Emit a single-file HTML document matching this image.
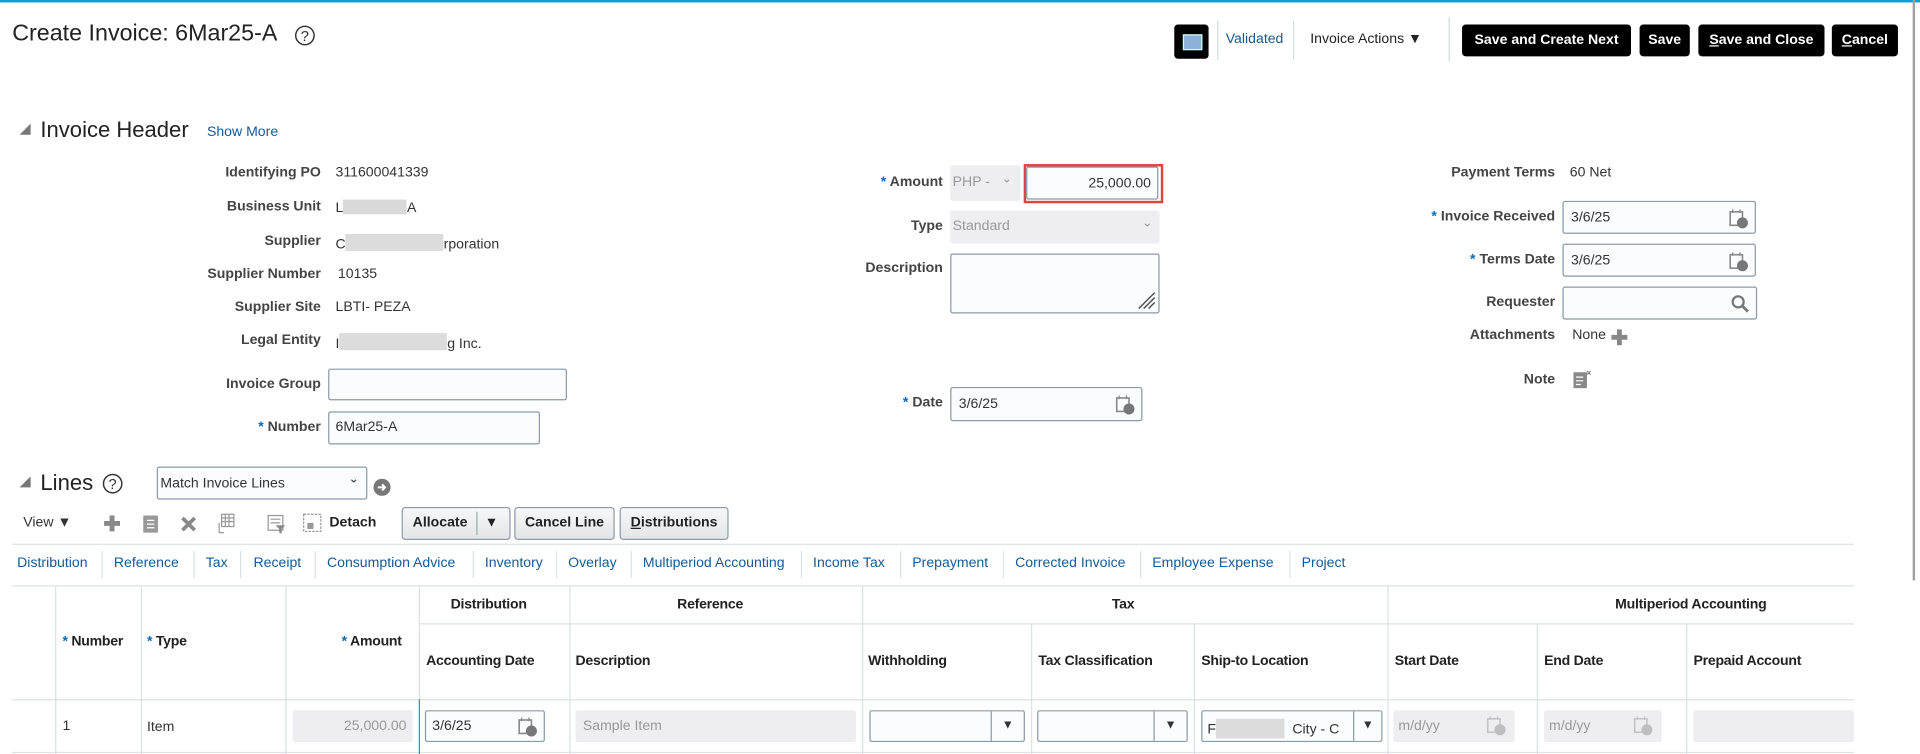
<!DOCTYPE html>
<html><head><meta charset="utf-8"><style>
html,body{margin:0;padding:0;background:#fff;overflow:hidden;width:1920px;height:754px}
#w{position:absolute;left:0;top:0;width:1568px;height:616px;transform:scale(1.22449);transform-origin:0 0;font-family:"Liberation Sans",Arial,sans-serif;color:#333;font-size:11.5px}
.a{position:absolute;white-space:nowrap}
.lbl{position:absolute;font-weight:bold;color:#444;text-align:right;font-size:11.5px;white-space:nowrap}
.val{position:absolute;font-size:11.5px;color:#333;white-space:nowrap}
.inp{position:absolute;border:1px solid #8a9aa8;border-radius:2px;background:#fbfcfd;box-sizing:border-box}
.dis{position:absolute;background:#eeeef0;border-radius:2px;color:#999;box-sizing:border-box}
.st{color:#0b6ab8;font-weight:bold}
.btn{position:absolute;background:#000;color:#fff;font-weight:bold;border-radius:3px;text-align:center;line-height:26px;height:26px;font-size:11.5px}
.gb{position:absolute;background:linear-gradient(#f6f7f8,#e3e6e9);border:1px solid #8c9aa7;border-radius:3px;font-weight:bold;box-sizing:border-box;height:27px;line-height:25px;font-size:11.5px;text-align:center;color:#222}
.tab{position:absolute;top:454px;color:#145b94;font-size:11.5px}
.tsep{position:absolute;top:450px;width:1px;height:22px;background:#dbe1e6}
.vl{position:absolute;width:1px;background:#dbe1e6}
.hl{position:absolute;height:1px;background:#dbe1e6}
.th{position:absolute;font-weight:bold;color:#222;font-size:11.5px;letter-spacing:-0.2px}
</style></head><body><div id="w">
<div class="a" style="left:0;top:0;width:1568px;height:2px;background:#0b9ee3"></div>
<div class="a" style="left:1562px;top:0;width:2px;height:474px;background:#a0a0a0"></div>

<div class="a" style="left:10px;top:17px;font-size:19px;color:#222">Create Invoice: 6Mar25-A</div>
<svg class="a" style="left:240px;top:20px" width="18" height="18" viewBox="0 0 18 18"><circle cx="9" cy="9" r="7.5" fill="none" stroke="#333" stroke-width="1.2"/><text x="9" y="13.5" font-size="12" text-anchor="middle" fill="#333" font-family="Liberation Sans">?</text></svg>

<div class="a" style="left:959px;top:20px;width:28px;height:28px;background:#000;border-radius:3px"></div>
<div class="a" style="left:966px;top:28px;width:14px;height:11px;background:#8fb0d8;border:1px solid #cfe"></div>
<div class="a" style="left:994px;top:17px;width:1px;height:32px;background:#d6dce2"></div>
<div class="a" style="left:1001px;top:26px;color:#145b94">Validated</div>
<div class="a" style="left:1056px;top:17px;width:1px;height:32px;background:#d6dce2"></div>
<div class="a" style="left:1070px;top:26px;color:#222">Invoice Actions &#9660;</div>
<div class="a" style="left:1183px;top:14px;width:1px;height:36px;background:#d6dce2"></div>
<div class="btn" style="left:1194px;top:20px;width:138px">Save and Create Next</div>
<div class="btn" style="left:1339px;top:20px;width:41px">Save</div>
<div class="btn" style="left:1387px;top:20px;width:103px"><u>S</u>ave and Close</div>
<div class="btn" style="left:1496px;top:20px;width:54px"><u>C</u>ancel</div>

<div class="a" style="left:16px;top:101px;width:0;height:0;border-left:9px solid transparent;border-bottom:9px solid #777"></div>
<div class="a" style="left:33px;top:96px;font-size:18px;color:#222">Invoice Header</div>
<div class="a" style="left:169px;top:102px;color:#145b94;font-size:11.5px">Show More</div>

<div class="lbl" style="right:1306px;top:135px">Identifying PO</div><div class="val" style="left:274px;top:135px">311600041339</div>
<div class="lbl" style="right:1306px;top:163px">Business Unit</div><div class="val" style="left:274px;top:163px">L<span style="display:inline-block;width:52px;height:12px;background:#d9d9d9;vertical-align:-2px"></span>A</div>
<div class="lbl" style="right:1306px;top:191px">Supplier</div><div class="val" style="left:274px;top:191px">C<span style="display:inline-block;width:80px;height:14px;background:#dcdcdc;vertical-align:-2px"></span>rporation</div>
<div class="lbl" style="right:1306px;top:218px">Supplier Number</div><div class="val" style="left:276px;top:218px">10135</div>
<div class="lbl" style="right:1306px;top:245px">Supplier Site</div><div class="val" style="left:274px;top:245px">LBTI- PEZA</div>
<div class="lbl" style="right:1306px;top:272px">Legal Entity</div><div class="val" style="left:274px;top:272px">I<span style="display:inline-block;width:88px;height:14px;background:#dcdcdc;vertical-align:-2px"></span>g Inc.</div>
<div class="lbl" style="right:1306px;top:308px">Invoice Group</div><div class="inp" style="left:268px;top:301px;width:195px;height:26px"></div>
<div class="lbl" style="right:1306px;top:343px"><span class="st">*</span> Number</div><div class="inp" style="left:268px;top:336px;width:173px;height:27px"><span class="a" style="left:5px;top:6px">6Mar25-A</span></div>

<div class="lbl" style="right:798px;top:143px"><span class="st">*</span> Amount</div>
<div class="dis" style="left:776px;top:135px;width:57px;height:29px"><span class="a" style="left:2px;top:8px">PHP -</span><span class="a" style="left:42px;top:6px;font-size:10px">&#8964;</span></div>
<div class="a" style="left:836px;top:134px;width:114px;height:32px;border:2px solid #e0443e;box-sizing:border-box"></div>
<div class="inp" style="left:838px;top:136px;width:108px;height:27px"><span class="a" style="right:5px;top:7px">25,000.00</span></div>
<div class="lbl" style="right:798px;top:179px">Type</div>
<div class="dis" style="left:776px;top:172px;width:171px;height:27px"><span class="a" style="left:2px;top:7px">Standard</span><span class="a" style="right:6px;top:5px;font-size:10px">&#8964;</span></div>
<div class="lbl" style="right:798px;top:213px">Description</div>
<div class="inp" style="left:776px;top:207px;width:171px;height:49px"><svg class="a" style="right:2px;bottom:2px" width="18" height="18"><path d="M4 17L17 4M8 17L17 8M12 17L17 12" stroke="#555" stroke-width="1.2"/></svg></div>
<div class="lbl" style="right:798px;top:323px"><span class="st">*</span> Date</div>
<div class="inp" style="left:776px;top:316px;width:157px;height:28px"><span class="a" style="left:6px;top:7px">3/6/25</span><svg class="a" style="right:4px;top:5px" width="18" height="17"><rect x="2" y="3" width="10" height="11" fill="none" stroke="#888" stroke-width="1.3"/><path d="M4 1v3M10 1v3" stroke="#888"/><circle cx="12" cy="12" r="4.5" fill="#777"/></svg></div>

<div class="lbl" style="right:298px;top:135px">Payment Terms</div><div class="val" style="left:1282px;top:135px">60 Net</div>
<div class="lbl" style="right:298px;top:171px"><span class="st">*</span> Invoice Received</div>
<div class="inp" style="left:1276px;top:164px;width:158px;height:27px"><span class="a" style="left:6px;top:7px">3/6/25</span><svg class="a" style="right:4px;top:5px" width="18" height="17"><rect x="2" y="3" width="10" height="11" fill="none" stroke="#888" stroke-width="1.3"/><path d="M4 1v3M10 1v3" stroke="#888"/><circle cx="12" cy="12" r="4.5" fill="#777"/></svg></div>
<div class="lbl" style="right:298px;top:206px"><span class="st">*</span> Terms Date</div>
<div class="inp" style="left:1276px;top:199px;width:158px;height:27px"><span class="a" style="left:6px;top:7px">3/6/25</span><svg class="a" style="right:4px;top:5px" width="18" height="17"><rect x="2" y="3" width="10" height="11" fill="none" stroke="#888" stroke-width="1.3"/><path d="M4 1v3M10 1v3" stroke="#888"/><circle cx="12" cy="12" r="4.5" fill="#777"/></svg></div>
<div class="lbl" style="right:298px;top:241px">Requester</div>
<div class="inp" style="left:1276px;top:234px;width:159px;height:27px"><svg class="a" style="right:5px;top:5px" width="16" height="16"><circle cx="6.5" cy="6.5" r="4.5" fill="none" stroke="#777" stroke-width="1.8"/><path d="M10 10l4.5 4.5" stroke="#777" stroke-width="2.2"/></svg></div>
<div class="lbl" style="right:298px;top:268px">Attachments</div><div class="val" style="left:1284px;top:268px">None</div>
<svg class="a" style="left:1315px;top:268px" width="15" height="15"><path d="M7.5 1v13M1 7.5h13" stroke="#888" stroke-width="4"/></svg>
<div class="lbl" style="right:298px;top:304px">Note</div>
<svg class="a" style="left:1284px;top:302px" width="16" height="16"><rect x="1" y="2" width="11" height="13" fill="#888"/><path d="M3 6h6M3 9h6M3 12h4" stroke="#fff"/><path d="M12 1l3 3M15 1l-3 3" stroke="#888"/></svg>

<div class="a" style="left:16px;top:389px;width:0;height:0;border-left:9px solid transparent;border-bottom:9px solid #777"></div>
<div class="a" style="left:33px;top:384px;font-size:18px;color:#222">Lines</div>
<svg class="a" style="left:83px;top:386px" width="18" height="18" viewBox="0 0 18 18"><circle cx="9" cy="9" r="7.5" fill="none" stroke="#333" stroke-width="1.2"/><text x="9" y="13.5" font-size="12" text-anchor="middle" fill="#333" font-family="Liberation Sans">?</text></svg>
<div class="inp" style="left:128px;top:381px;width:172px;height:27px;border-color:#8a9aa8"><span class="a" style="left:2px;top:7px;font-size:11.5px">Match Invoice Lines</span><span class="a" style="right:6px;top:4px;font-size:10px">&#8964;</span></div>
<svg class="a" style="left:305px;top:391px" width="14" height="14"><circle cx="7" cy="7" r="7" fill="#777"/><path d="M3.5 7h6M7 4.5l2.5 2.5-2.5 2.5" stroke="#fff" stroke-width="1.6" fill="none"/></svg>

<div class="a" style="left:19px;top:421px;font-size:11.5px">View &#9660;</div>
<svg class="a" style="left:84px;top:420px" width="15" height="15"><path d="M7.5 1v13M1 7.5h13" stroke="#888" stroke-width="4"/></svg>
<svg class="a" style="left:116px;top:420px" width="14" height="16"><rect x="1" y="1" width="12" height="14" fill="#999"/><path d="M4 5h6M4 8h6M4 11h6" stroke="#fff"/></svg>
<svg class="a" style="left:147px;top:421px" width="14" height="14"><path d="M2 2l10 10M12 2L2 12" stroke="#888" stroke-width="3"/></svg>
<svg class="a" style="left:176px;top:419px" width="16" height="18"><rect x="5" y="1" width="10" height="10" fill="none" stroke="#999"/><path d="M5 4h10M5 7h10M8 1v10M11 1v10M3 8v8h4" stroke="#999" fill="none"/></svg>
<svg class="a" style="left:218px;top:420px" width="16" height="16"><rect x="1" y="1" width="12" height="12" fill="none" stroke="#999"/><path d="M3 4h8M3 7h8" stroke="#999"/><path d="M7 9h8l-3 3v4l-2-1v-3z" fill="#888"/></svg>
<svg class="a" style="left:247px;top:419px" width="16" height="16"><rect x="1" y="1" width="14" height="14" fill="none" stroke="#999" stroke-dasharray="2 1"/><rect x="4" y="8" width="5" height="5" fill="#999"/></svg>
<div class="a" style="left:269px;top:421px;font-weight:bold;color:#222">Detach</div>
<div class="gb" style="left:328px;top:414px;width:89px;text-align:left;padding-left:8px">Allocate<span class="a" style="left:60px;top:3px;width:1px;height:19px;background:#9aa"></span><span class="a" style="left:67px;top:0;font-size:11px">&#9660;</span></div>
<div class="gb" style="left:420px;top:414px;width:82px">Cancel Line</div>
<div class="gb" style="left:506px;top:414px;width:89px"><u>D</u>istributions</div>

<div class="hl" style="left:10px;top:444px;width:1504px"></div>
<div class="tab" style="left:14px">Distribution</div><div class="tsep" style="left:83px"></div>
<div class="tab" style="left:93px">Reference</div><div class="tsep" style="left:158px"></div>
<div class="tab" style="left:168px">Tax</div><div class="tsep" style="left:196px"></div>
<div class="tab" style="left:207px">Receipt</div><div class="tsep" style="left:257px"></div>
<div class="tab" style="left:267px">Consumption Advice</div><div class="tsep" style="left:386px"></div>
<div class="tab" style="left:396px">Inventory</div><div class="tsep" style="left:454px"></div>
<div class="tab" style="left:464px">Overlay</div><div class="tsep" style="left:515px"></div>
<div class="tab" style="left:525px">Multiperiod Accounting</div><div class="tsep" style="left:654px"></div>
<div class="tab" style="left:664px">Income Tax</div><div class="tsep" style="left:735px"></div>
<div class="tab" style="left:745px">Prepayment</div><div class="tsep" style="left:819px"></div>
<div class="tab" style="left:829px">Corrected Invoice</div><div class="tsep" style="left:931px"></div>
<div class="tab" style="left:941px">Employee Expense</div><div class="tsep" style="left:1053px"></div>
<div class="tab" style="left:1063px">Project</div>

<div class="hl" style="left:10px;top:478px;width:1504px"></div>
<div class="hl" style="left:342px;top:509px;width:1172px"></div>
<div class="hl" style="left:10px;top:571px;width:1504px"></div>
<div class="hl" style="left:10px;top:614px;width:1504px"></div>
<div class="vl" style="left:45px;top:479px;height:137px"></div>
<div class="vl" style="left:115px;top:479px;height:137px"></div>
<div class="vl" style="left:233px;top:479px;height:137px"></div>
<div class="vl" style="left:342px;top:479px;height:92px"></div>
<div class="a" style="left:342px;top:571px;width:1px;height:45px;background:#0b9ee3"></div>
<div class="vl" style="left:465px;top:479px;height:137px"></div>
<div class="vl" style="left:704px;top:479px;height:137px"></div>
<div class="vl" style="left:842px;top:509px;height:107px"></div>
<div class="vl" style="left:975px;top:509px;height:107px"></div>
<div class="vl" style="left:1133px;top:479px;height:137px"></div>
<div class="vl" style="left:1255px;top:509px;height:107px"></div>
<div class="vl" style="left:1377px;top:509px;height:107px"></div>

<div class="th" style="left:368px;top:488px">Distribution</div>
<div class="th" style="left:553px;top:488px">Reference</div>
<div class="th" style="left:908px;top:488px">Tax</div>
<div class="th" style="left:1319px;top:488px">Multiperiod Accounting</div>
<div class="th" style="left:51px;top:518px"><span class="st">*</span> Number</div>
<div class="th" style="left:120px;top:518px"><span class="st">*</span> Type</div>
<div class="th" style="left:279px;top:518px"><span class="st">*</span> Amount</div>
<div class="th" style="left:348px;top:534px">Accounting Date</div>
<div class="th" style="left:470px;top:534px">Description</div>
<div class="th" style="left:709px;top:534px">Withholding</div>
<div class="th" style="left:848px;top:534px">Tax Classification</div>
<div class="th" style="left:981px;top:534px">Ship-to Location</div>
<div class="th" style="left:1139px;top:534px">Start Date</div>
<div class="th" style="left:1261px;top:534px">End Date</div>
<div class="th" style="left:1383px;top:534px">Prepaid Account</div>

<div class="a" style="left:51px;top:587px">1</div>
<div class="a" style="left:120px;top:588px">Item</div>
<div class="dis" style="left:239px;top:580px;width:98px;height:26px"><span class="a" style="right:5px;top:7px;color:#999">25,000.00</span></div>
<div class="inp" style="left:347px;top:580px;width:98px;height:26px"><span class="a" style="left:5px;top:6px">3/6/25</span><svg class="a" style="right:4px;top:4px" width="18" height="17"><rect x="2" y="3" width="10" height="11" fill="none" stroke="#888" stroke-width="1.3"/><path d="M4 1v3M10 1v3" stroke="#888"/><circle cx="12" cy="12" r="4.5" fill="#777"/></svg></div>
<div class="dis" style="left:470px;top:580px;width:229px;height:26px"><span class="a" style="left:6px;top:7px;color:#999">Sample Item</span></div>
<div class="inp" style="left:710px;top:580px;width:127px;height:26px"><span class="a" style="right:0;top:0;width:26px;height:24px;border-left:1px solid #8a9aa8;text-align:center;line-height:24px;font-size:10px">&#9660;</span></div>
<div class="inp" style="left:847px;top:580px;width:123px;height:26px"><span class="a" style="right:0;top:0;width:26px;height:24px;border-left:1px solid #8a9aa8;text-align:center;line-height:24px;font-size:10px">&#9660;</span></div>
<div class="inp" style="left:981px;top:580px;width:148px;height:26px;overflow:hidden"><span class="a" style="left:4px;top:6px">F<span style="display:inline-block;width:56px;height:16px;background:#dcdcdc;vertical-align:-4px"></span>&nbsp;&nbsp;City - C</span><span class="a" style="right:0;top:0;width:22px;height:24px;background:#fbfcfd;border-left:1px solid #8a9aa8;text-align:center;line-height:24px;font-size:10px">&#9660;</span></div>
<div class="dis" style="left:1138px;top:580px;width:99px;height:26px"><span class="a" style="left:4px;top:7px;color:#999">m/d/yy</span><svg class="a" style="right:6px;top:4px;opacity:.4" width="18" height="17"><rect x="2" y="3" width="10" height="11" fill="none" stroke="#888" stroke-width="1.3"/><path d="M4 1v3M10 1v3" stroke="#888"/><circle cx="12" cy="12" r="4.5" fill="#777"/></svg></div>
<div class="dis" style="left:1261px;top:580px;width:96px;height:26px"><span class="a" style="left:4px;top:7px;color:#999">m/d/yy</span><svg class="a" style="right:6px;top:4px;opacity:.4" width="18" height="17"><rect x="2" y="3" width="10" height="11" fill="none" stroke="#888" stroke-width="1.3"/><path d="M4 1v3M10 1v3" stroke="#888"/><circle cx="12" cy="12" r="4.5" fill="#777"/></svg></div>
<div class="dis" style="left:1383px;top:580px;width:131px;height:26px"></div>
</div></body></html>
